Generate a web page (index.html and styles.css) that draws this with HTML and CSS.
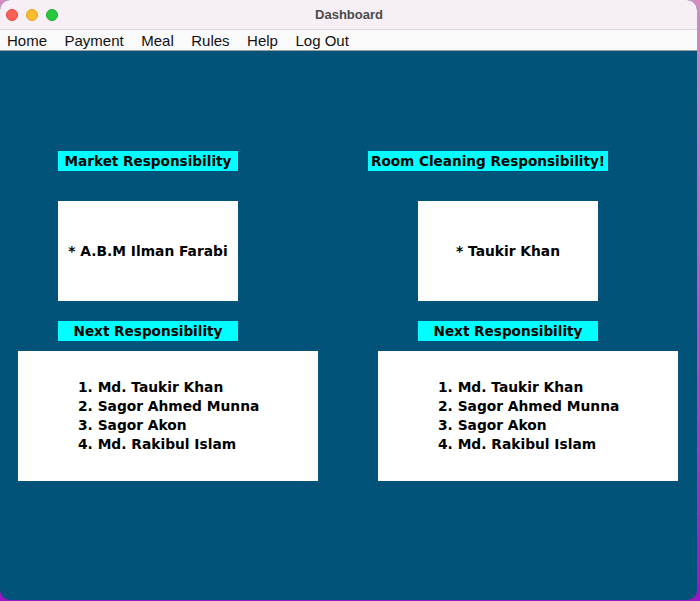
FILE: index.html
```html
<!DOCTYPE html>
<html lang="en">
<head>
    <meta charset="UTF-8">
    <meta name="viewport" content="width=device-width, initial-scale=1.0">
    <title>Dashboard</title>
    <link rel="stylesheet" href="styles.css">
</head>
<body>
    <div class="window">
        <div class="title-bar">
            <div class="lights">
                <span class="light red"></span>
                <span class="light yellow"></span>
                <span class="light green"></span>
            </div>
            <div class="title">Dashboard</div>
        </div>
        <div class="menu-bar">
            <span class="menu-item">Home</span>
            <span class="menu-item">Payment</span>
            <span class="menu-item">Meal</span>
            <span class="menu-item">Rules</span>
            <span class="menu-item">Help</span>
            <span class="menu-item">Log Out</span>
        </div>
        <div class="content">
            <div class="column">
                <div class="label">Market Responsibility</div>
                <div class="current">* A.B.M Ilman Farabi</div>
                <div class="label next-label">Next Responsibility</div>
                <div class="next-list">
                    <div>1. Md. Taukir Khan</div>
                    <div>2. Sagor Ahmed Munna</div>
                    <div>3. Sagor Akon</div>
                    <div>4. Md. Rakibul Islam</div>
                </div>
            </div>
            <div class="column">
                <div class="label wide">Room Cleaning Responsibility!</div>
                <div class="current">* Taukir Khan</div>
                <div class="label next-label">Next Responsibility</div>
                <div class="next-list">
                    <div>1. Md. Taukir Khan</div>
                    <div>2. Sagor Ahmed Munna</div>
                    <div>3. Sagor Akon</div>
                    <div>4. Md. Rakibul Islam</div>
                </div>
            </div>
        </div>
    </div>
</body>
</html>
```

FILE: styles.css
```css
body {
    margin: 0;
    width: 700px;
    height: 601px;
    background: linear-gradient(180deg, #d58cbf 0%, #b04cc0 60%, #9a18c4 100%);
    font-family: 'DejaVu Sans', sans-serif;
    overflow: hidden;
}

.window {
    width: 697px;
    height: 600px;
    border-radius: 10px;
    overflow: hidden;
    display: flex;
    flex-direction: column;
    background-color: #02537a;
}

.title-bar {
    height: 29px;
    border-bottom: 1px solid #d9d2d9;
    background-color: #f6eff6;
    display: flex;
    align-items: center;
    position: relative;
}

.lights {
    display: flex;
    gap: 8px;
    padding-left: 6px;
    margin-top: 1px;
}

.light {
    width: 12px;
    height: 12px;
    border-radius: 50%;
    box-sizing: border-box;
}

.red {
    background-color: #fe5f57;
    border: 1px solid #e2463f;
}

.yellow {
    background-color: #febc2e;
    border: 1px solid #e1a116;
}

.green {
    background-color: #28c840;
    border: 1px solid #14ae2b;
}

.title {
    position: absolute;
    left: 0;
    right: 0;
    text-align: center;
    padding-left: 1px;
    font-family: 'Liberation Sans', Arial, sans-serif;
    font-weight: bold;
    font-size: 13px;
    color: #4b4b4b;
}

.menu-bar {
    height: 20px;
    border-bottom: 1px solid #9d9d9d;
    background-color: #fafafa;
    display: flex;
    align-items: center;
    gap: 17.5px;
    padding-left: 7px;
    font-family: 'Liberation Sans', Arial, sans-serif;
    font-size: 15px;
    color: #111;
}

.content {
    flex: 1;
    display: flex;
    gap: 60px;
    padding: 100px 0 0 18px;
}

.column {
    width: 300px;
    display: flex;
    flex-direction: column;
    align-items: flex-start;
}

.label {
    width: 180px;
    height: 20px;
    margin-left: 40px;
    background-color: #00ffff;
    color: #000;
    font-weight: bold;
    font-size: 13.6px;
    line-height: 21px;
    text-align: center;
    white-space: nowrap;
}

.label.wide {
    width: 240px;
    margin-left: -10px;
}

.current {
    width: 180px;
    height: 100px;
    margin: 30px 0 0 40px;
    background-color: #fff;
    display: flex;
    justify-content: center;
    align-items: center;
    font-weight: bold;
    font-size: 13.8px;
    color: #000;
}

.next-label {
    margin-top: 20px;
}

.next-list {
    width: 240px;
    height: 130px;
    margin-top: 10px;
    padding-left: 60px;
    background-color: #fff;
    display: flex;
    flex-direction: column;
    justify-content: center;
    font-weight: bold;
    font-size: 13.8px;
    line-height: 19px;
    color: #000;
}
```
